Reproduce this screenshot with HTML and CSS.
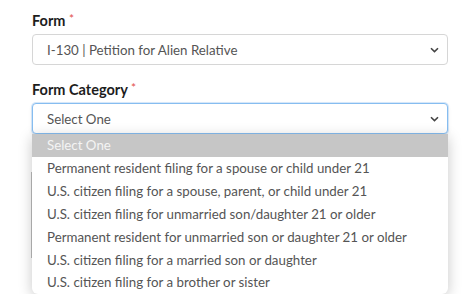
FILE: index.html
```html
<!DOCTYPE html>
<html>
<head>
<meta charset="utf-8">
<link rel="stylesheet" href="styles.css">
</head>
<body>
<div class="form">
  <div class="group">
    <label class="label">Form <span class="req">*</span></label>
    <div class="select">
      <span class="value">I-130 | Petition for Alien Relative</span>
      <svg class="chev" width="9" height="6" viewBox="0 0 9 6"><path d="M1 1.2 L4.5 4.6 L8 1.2" fill="none" stroke="#444" stroke-width="1.6"/></svg>
    </div>
  </div>
  <div class="group">
    <label class="label">Form Category <span class="req">*</span></label>
    <div class="select-wrap">
      <div class="select focus">
        <span class="value">Select One</span>
        <svg class="chev" width="9" height="6" viewBox="0 0 9 6"><path d="M1 1.2 L4.5 4.6 L8 1.2" fill="none" stroke="#444" stroke-width="1.6"/></svg>
      </div>
      <div class="behind"></div>
      <ul class="menu">
        <li class="opt active">Select One</li>
        <li class="opt">Permanent resident filing for a spouse or child under 21</li>
        <li class="opt">U.S. citizen filing for a spouse, parent, or child under 21</li>
        <li class="opt">U.S. citizen filing for unmarried son/daughter 21 or older</li>
        <li class="opt">Permanent resident for unmarried son or daughter 21 or older</li>
        <li class="opt">U.S. citizen filing for a married son or daughter</li>
        <li class="opt">U.S. citizen filing for a brother or sister</li>
      </ul>
    </div>
  </div>
</div>
</body>
</html>
```
FILE: styles.css
```css
html, body {
  margin: 0;
  padding: 0;
  background: #fff;
  font-family: Lato, "Liberation Sans", sans-serif;
}
body {
  height: 294px;
  overflow: hidden;
}
.form {
  width: 416px;
  padding: 12px 0 0 32px;
}
.group {
  margin-bottom: 16px;
}
.label {
  display: block;
  height: 18px;
  font-size: 14.5px;
  font-weight: 700;
  color: #1d1d1d;
  line-height: 18px;
  margin-bottom: 4px;
}
.req {
  color: #e2504a;
  font-weight: 400;
  font-size: 12px;
  line-height: 0;
  vertical-align: 3px;
}
.select {
  box-sizing: border-box;
  height: 31px;
  border: 1px solid #d6d6d6;
  border-radius: 4px;
  display: flex;
  align-items: center;
  justify-content: space-between;
  padding: 0 8px 0 14px;
  background: #fff;
}
.select.focus {
  border-color: #86bdf0;
  box-shadow: 0 0 0 1px rgba(140, 190, 240, 0.35), 0 2px 4px rgba(0,0,0,0.08);
}
.value {
  font-size: 13.3px;
  color: #555;
}
.select-wrap {
  position: relative;
}
.behind {
  height: 86px;
  margin-top: 38px;
  border-left: 1px solid #bbb;
  margin-left: -1px;
}
.menu {
  position: absolute;
  left: 0;
  top: 31px;
  width: 416px;
  margin: 0;
  padding: 0;
  list-style: none;
  background: #fff;
  border-radius: 0 0 6px 6px;
  box-shadow: 0 3px 14px rgba(0,0,0,0.22);
  overflow: hidden;
}
.opt {
  height: 23px;
  line-height: 23px;
  padding-left: 15px;
  font-size: 13.3px;
  color: #555;
  white-space: nowrap;
}
.opt:last-child {
  height: 22px;
  line-height: 21px;
}
.opt.active {
  background: #c6c6c6;
  color: #f4f4f4;
}
```
